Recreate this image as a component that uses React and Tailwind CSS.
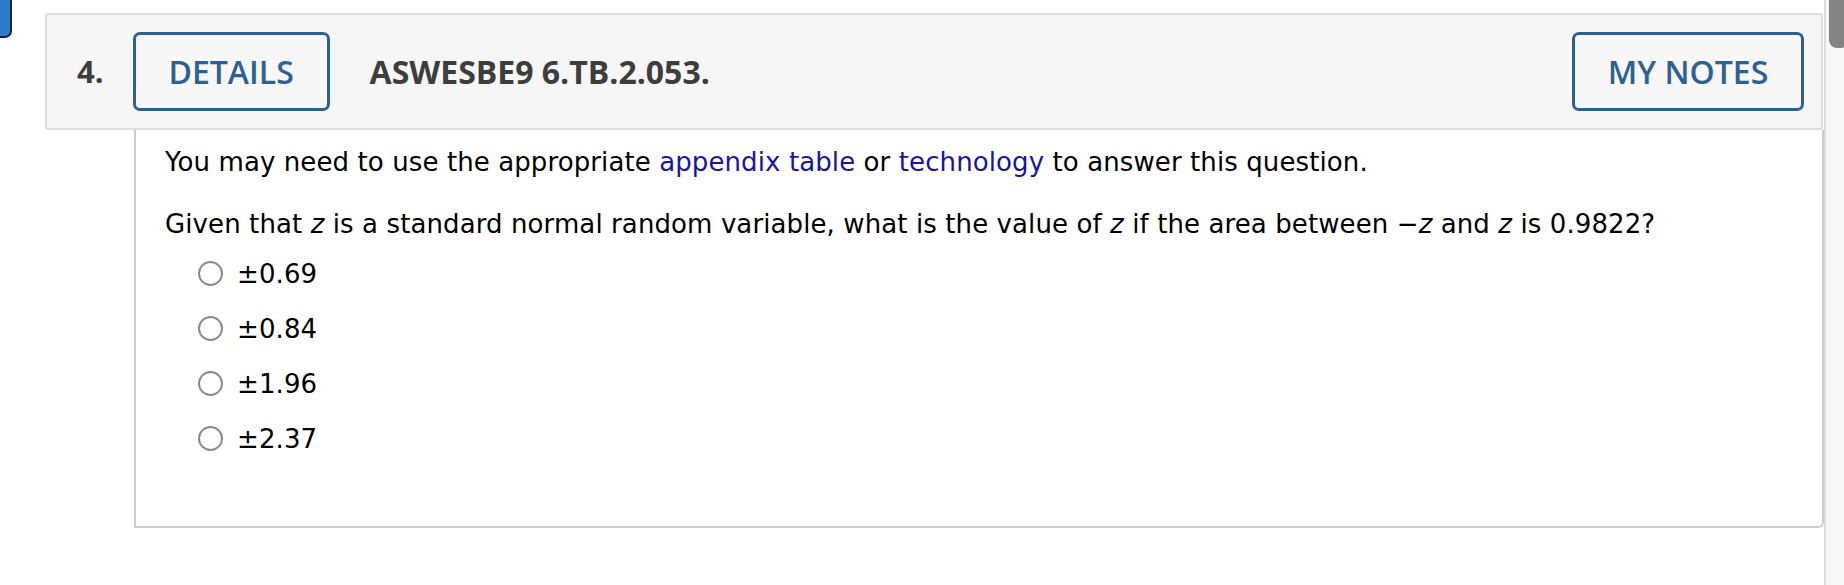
import React from "react";

const opts = ["±0.69", "±0.84", "±1.96", "±2.37"];

export default function App() {
  return (
    <div className="flex h-[585px] w-[1844px] overflow-hidden bg-white">
      <div className="relative flex-1 pt-[13px] pl-[45px] pr-[1px]">
        <div className="absolute left-0 top-0 h-[38px] w-[12px] rounded-br-[7px] border-r-2 border-b-2 border-[#1b2430] bg-[#2f7bd0]" />
        <div
          className="flex h-[117px] items-center rounded-[3px] border-2 border-[#dedede] bg-[#f6f6f6] pl-[30px] pr-[17px]"
          style={{ fontFamily: '"Open Sans", sans-serif' }}
        >
          <span className="text-[31px] font-bold text-[#3d3d3d]">4.</span>
          <button className="ml-[29px] flex h-[79px] w-[197px] items-center justify-center rounded-[7px] border-[3px] border-[#2d6193] bg-[#f7f7f7] text-[32px] font-semibold text-[#2d6193]">
            DETAILS
          </button>
          <span className="ml-[40px] text-[32px] font-bold text-[#3d3d3d]">ASWESBE9 6.TB.2.053.</span>
          <div className="flex-1" />
          <button className="flex h-[79px] w-[232px] items-center justify-center rounded-[7px] border-[3px] border-[#2d6193] bg-[#f7f7f7] text-[32px] font-semibold text-[#2d6193]">
            MY NOTES
          </button>
        </div>
        <div
          className="ml-[89px] mr-[-1px] h-[398px] rounded-br-[6px] border-x-2 border-b-2 border-[#cccccc] pl-[29px] pt-[16px] text-[26px] leading-[32px] tracking-[0.1px] text-black"
          style={{ fontFamily: '"DejaVu Sans", Verdana, sans-serif' }}
        >
          <p>
            You may need to use the appropriate <span className="text-[#1616a6]">appendix table</span> or{" "}
            <span className="text-[#1616a6]">technology</span> to answer this question.
          </p>
          <p className="mt-[30px]">
            Given that <i>z</i> is a standard normal random variable, what is the value of <i>z</i> if the area between −<i>z</i> and <i>z</i> is 0.9822?
          </p>
          <div className="mt-[18px] flex flex-col gap-[23px] pl-[33px]">
            {opts.map((o) => (
              <label key={o} className="flex h-[32px] items-center">
                <span className="mt-[-2px] inline-block h-[25px] w-[25px] rounded-full border-2 border-[#8a8a8a] bg-white" />
                <span className="ml-[14px]">{o}</span>
              </label>
            ))}
          </div>
        </div>
      </div>
      <div className="relative w-[20px] border-l-2 border-[#dcdcdc] bg-[#f8f8f8]">
        <div className="absolute right-0 top-0 h-[48px] w-[15px] rounded-bl-[8px] rounded-br-[2px] bg-[#838383]" />
      </div>
    </div>
  );
}
